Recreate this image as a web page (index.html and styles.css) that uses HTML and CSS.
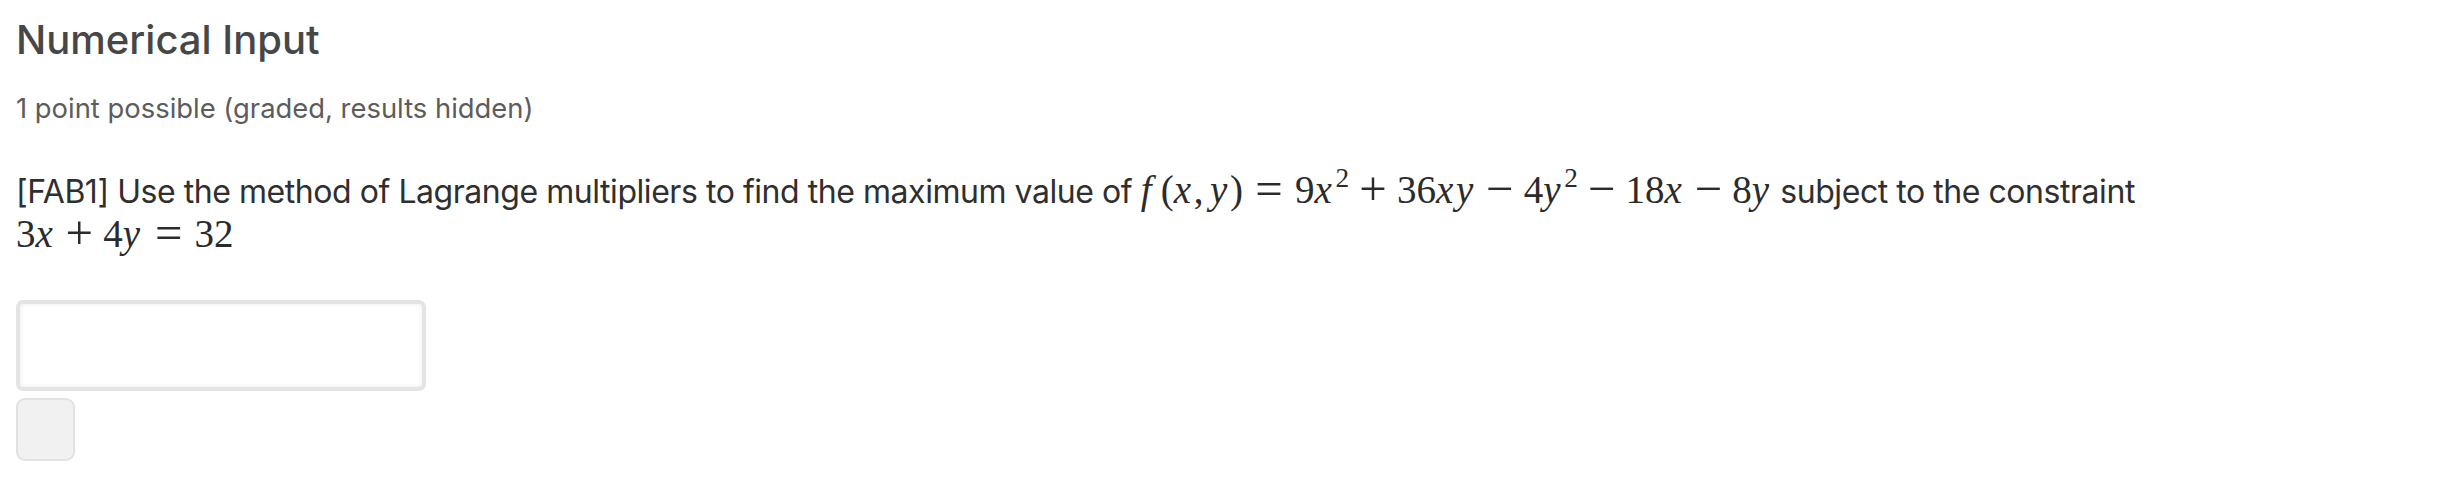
FILE: index.html
```html
<!DOCTYPE html>
<html lang="en">
<head>
<meta charset="utf-8">
<title>Numerical Input</title>
<link rel="stylesheet" href="styles.css">
</head>
<body>
<div class="problem">
  <h2 class="problem-title">Numerical Input</h2>
  <div class="problem-progress">1 point possible (graded, results hidden)</div>
  <p class="question">[FAB1] Use the method of Lagrange multipliers to find the maximum value of <span class="math"><i>f</i><span class="thin"></span>(<i>x</i>,<span class="thin"></span><i>y</i>)<span class="rel">=</span>9<i>x</i><sup>2</sup><span class="bin">+</span>36<i>x</i><i>y</i><span class="bin">−</span>4<i>y</i><sup>2</sup><span class="bin">−</span>18<i>x</i><span class="bin">−</span>8<i>y</i></span> subject to the constraint <span class="math">3<i>x</i><span class="bin">+</span>4<i>y</i><span class="rel">=</span>32</span></p>
  <div class="answer">
    <input class="answer-input" type="text" aria-label="Answer">
    <button class="submit-btn" type="button" aria-label="Submit"></button>
  </div>
</div>
</body>
</html>
```
FILE: styles.css
```css
html, body {
  margin: 0;
  padding: 0;
  background: #ffffff;
}

.problem {
  padding: 15px 16px 0 16px;
  font-family: Inter, "Noto Sans", sans-serif;
}

.problem-title {
  margin: 0;
  font-size: 40px;
  line-height: 50px;
  font-weight: 500;
  color: #474747;
}

.problem-progress {
  margin-top: 23px;
  font-size: 27.4px;
  line-height: 40px;
  color: #5c5c5c;
}

.question {
  margin: 42px 0 0 0;
  max-width: 2260px;
  font-size: 32px;
  line-height: 44px;
  letter-spacing: -0.45px;
  color: #2f2f2f;
}

.math {
  font-family: "Liberation Serif", "Times New Roman", serif;
  font-size: 39px;
  line-height: 38px;
  letter-spacing: 0;
  color: #2b2b2b;
  white-space: nowrap;
}

.math i {
  font-style: italic;
  padding-right: 0.07em;
}

.math sup {
  font-size: 0.7em;
  line-height: 0;
  vertical-align: 0.6em;
  margin-left: 0.04em;
}

.math .bin,
.math .rel {
  font-size: 1.25em;
  vertical-align: -0.05em;
}

.math .bin {
  margin: 0 0.207em;
}

.math .rel {
  margin: 0 0.25em;
}

.math .thin {
  display: inline-block;
  width: 0.167em;
}

.answer {
  margin-top: 42px;
  display: flex;
  flex-direction: column;
  align-items: flex-start;
  gap: 7px;
}

.answer-input {
  box-sizing: border-box;
  width: 410px;
  height: 91px;
  margin: 0;
  border: 4px solid #e4e4e4;
  border-radius: 7px;
  box-shadow: inset 0 0 5px rgba(0, 0, 0, 0.08);
  background: #ffffff;
  font-size: 32px;
  font-family: Inter, sans-serif;
  outline: none;
}

.submit-btn {
  box-sizing: border-box;
  width: 59px;
  height: 63px;
  margin: 0;
  padding: 0;
  border: 2px solid #e2e2e2;
  border-radius: 9px;
  background: #f1f1f1;
}
```
